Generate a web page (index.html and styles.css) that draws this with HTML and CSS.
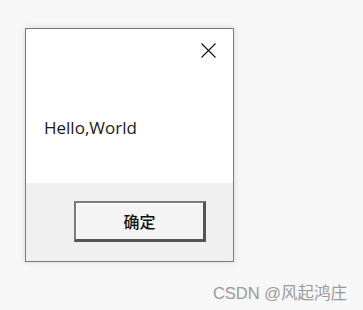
FILE: index.html
```html
<!DOCTYPE html>
<html>
<head>
<meta charset="utf-8">
<link rel="stylesheet" href="styles.css">
</head>
<body>
<div class="page">
  <div class="dialog">
    <div class="content">
      <div class="header">
        <svg class="close" width="15" height="15" viewBox="0 0 15 15"><path d="M0.5 0.5 L14.5 14.5 M14.5 0.5 L0.5 14.5" stroke="#111" stroke-width="1.1" fill="none"/></svg>
      </div>
      <div class="message">Hello,World</div>
    </div>
    <div class="footer">
      <button class="ok">确定</button>
    </div>
  </div>
  <div class="watermark">CSDN @风起鸿庄</div>
</div>
</body>
</html>
```
FILE: styles.css
```css
html, body {
  margin: 0;
  padding: 0;
  background: #f7f7f7;
}
.page {
  width: 363px;
  height: 310px;
  padding: 28px 0 0 25px;
  box-sizing: border-box;
  display: flex;
  flex-direction: column;
}
.dialog {
  width: 209px;
  height: 234px;
  box-sizing: border-box;
  border: 1px solid #7a7a7a;
  background: #fff;
  display: flex;
  flex-direction: column;
  box-shadow: 0 0 6px rgba(0,0,0,0.12);
}
.content {
  height: 154px;
  display: flex;
  flex-direction: column;
}
.header {
  display: flex;
  justify-content: flex-end;
  padding: 14px 17px 0 0;
}
.close {
  display: block;
}
.message {
  margin-top: 59px;
  padding-left: 18px;
  font-family: "Open Sans", "Noto Sans", sans-serif;
  font-size: 17px;
  line-height: 22px;
  color: #1a1a1a;
}
.footer {
  flex: 1;
  background: #f0f0f0;
  padding: 18px 0 0 48px;
}
.ok {
  width: 132px;
  height: 41px;
  box-sizing: border-box;
  border-style: solid;
  border-width: 2px 3px 3px 2px;
  border-color: #7a7a7a #555 #555 #7a7a7a;
  background: #f4f4f4;
  font-family: "Noto Sans CJK SC", sans-serif;
  font-size: 16px;
  font-weight: 500;
  color: #111;
  padding: 0;
  box-shadow: inset 1px 1px 0 #fff;
}
.watermark {
  margin-top: 20px;
  align-self: flex-end;
  margin-right: 16px;
  font-family: "Liberation Sans", "Noto Sans CJK SC", sans-serif;
  font-size: 16.5px;
  line-height: 22px;
  color: #9a9a9a;
}
```
